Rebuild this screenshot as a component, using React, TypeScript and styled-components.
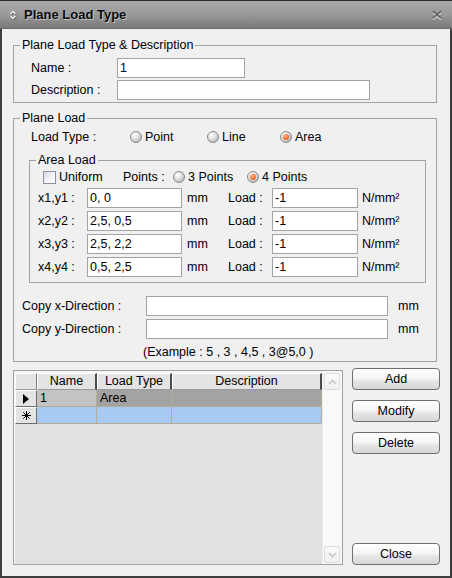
import styled, { createGlobalStyle, css } from "styled-components";

const GlobalStyle = createGlobalStyle`
  html, body {
    margin: 0;
    padding: 0;
    background: #f0f0f0;
  }
  body {
    font-family: "Liberation Sans", Arial, sans-serif;
    font-size: 12.5px;
    color: #000;
  }
  * {
    box-sizing: border-box;
  }
`;

const Window = styled.div`
  width: 452px;
  height: 578px;
  display: flex;
  flex-direction: column;
  background: #f0f0f0;
  border: 2px solid #3e3e3e;
  border-top: none;
`;

const TitleBar = styled.div`
  height: 29px;
  flex: none;
  display: flex;
  align-items: center;
  padding: 0 10px 0 9px;
  margin: 0 -2px;
  border-top: 1px solid #2e2e2e;
  border-bottom: 1px solid #6c6c6c;
  background: linear-gradient(#a9a9a9 0%, #9c9c9c 45%, #8c8c8c 70%, #7a7a7a 100%);
`;

const Title = styled.span`
  margin-left: 7px;
  font-weight: bold;
  font-size: 13px;
  color: #0c0c0c;
  text-shadow: 1px 1px 0 #c4c4c4;
  flex: 1;
`;

const Body = styled.div`
  flex: 1;
  display: flex;
  flex-direction: column;
  padding: 9px 11px 0 11px;
`;

const Group = styled.fieldset<{ $mt?: number; $ml?: number; $mr?: number; $pt?: number; $pb?: number }>`
  margin: ${(p) => p.$mt ?? 0}px ${(p) => p.$mr ?? 0}px 0 ${(p) => p.$ml ?? 0}px;
  padding: ${(p) => p.$pt ?? 0}px 0 ${(p) => p.$pb ?? 0}px 6px;
  border: 1px solid #a2a2a2;
  min-width: 0;
`;

const Legend = styled.legend`
  padding: 0 2px;
  line-height: 14px;
`;

const Row = styled.div<{ $indent?: number; $h?: number; $mt?: number }>`
  display: flex;
  align-items: center;
  height: ${(p) => p.$h ?? 20}px;
  padding-left: ${(p) => p.$indent ?? 0}px;
  margin-top: ${(p) => p.$mt ?? 0}px;
  white-space: nowrap;
`;

const Label = styled.span<{ $w: number }>`
  width: ${(p) => p.$w}px;
  flex: none;
  white-space: nowrap;
  margin-top: -1px;
`;

const TextBox = styled.input<{ $w: number }>`
  width: ${(p) => p.$w}px;
  height: 20px;
  flex: none;
  border: 1px solid #a4a4a4;
  background: #fff;
  padding: 0 2px;
  font: inherit;
  color: #000;
  outline: none;
`;

const Unit = styled.span<{ $pl?: number }>`
  padding-left: ${(p) => p.$pl ?? 0}px;
  white-space: nowrap;
`;

const Option = styled.label<{ $w?: number }>`
  display: inline-flex;
  align-items: center;
  gap: 3px;
  width: ${(p) => (p.$w ? `${p.$w}px` : "auto")};
  flex: none;
`;

const RadioDot = styled.span<{ $on?: boolean }>`
  width: 12px;
  height: 12px;
  flex: none;
  border-radius: 50%;
  border: 1px solid #8a8a8a;
  background: radial-gradient(circle at 35% 30%, #ffffff 0%, #e2e2e2 40%, #a2a2a2 100%);
  position: relative;
  ${(p) =>
    p.$on &&
    css`
      &::after {
        content: "";
        position: absolute;
        left: 2px;
        top: 2px;
        width: 6px;
        height: 6px;
        border-radius: 50%;
        background: radial-gradient(circle at 40% 35%, #ffc09a 0%, #ff7030 50%, #e04a10 100%);
      }
    `}
`;

const CheckBox = styled.span`
  width: 13px;
  height: 13px;
  flex: none;
  border: 1px solid #8f90a2;
  background: linear-gradient(135deg, #d8d8e2 0%, #f4f4f8 60%, #ffffff 100%);
`;

const CoordRow = styled.div<{ $mt?: number }>`
  display: grid;
  grid-template-columns: 49px 95px 46px 44px 86px auto;
  align-items: center;
  height: 20px;
  padding-left: 2px;
  margin-top: ${(p) => p.$mt ?? 0}px;
  white-space: nowrap;
`;

const Note = styled.div`
  margin-top: 6px;
  height: 14px;
  line-height: 14px;
  padding-left: 123px;
`;

const Bottom = styled.div`
  display: flex;
  margin-top: 8px;
  gap: 9px;
`;

const Grid = styled.div`
  width: 330px;
  height: 195px;
  flex: none;
  display: flex;
  border: 1px solid #a0a0a0;
  background: #f7f7f7;
  padding: 2px 2px 0 1px;
`;

const DataArea = styled.div`
  width: 308px;
  display: grid;
  grid-template-columns: 22px 60px 75px 150px;
  grid-auto-rows: 17px;
  align-content: start;
  background: #e1e1e3;
`;

const HeadCell = styled.div<{ $corner?: boolean }>`
  background: #e4e4e4;
  border-top: 1px solid #ffffff;
  border-left: 1px solid #ffffff;
  border-bottom: 1px solid #9a9a9a;
  border-right: ${(p) => (p.$corner ? "1px solid #7a7a7a" : "2px solid #4c4c4c")};
  text-align: center;
  line-height: 14px;
`;

const RowHead = styled.div`
  background: #e4e4e4;
  border-top: 1px solid #ffffff;
  border-left: 1px solid #ffffff;
  border-right: 1px solid #6e6e6e;
  border-bottom: 1px solid #6e6e6e;
  display: flex;
  align-items: center;
  justify-content: center;
`;

const Cell = styled.div<{ $bg: string }>`
  background: ${(p) => p.$bg};
  border-right: 1px solid #b2ae9a;
  border-bottom: 1px solid #b2ae9a;
  padding-left: 3px;
  line-height: 16px;
  white-space: nowrap;
  overflow: hidden;
`;

const ScrollBar = styled.div`
  width: 18px;
  display: flex;
  flex-direction: column;
  justify-content: space-between;
  padding: 0 1px 1px 1px;
  background: #f9f9f9;
  border-left: 1px solid #ececec;
`;

const ScrollButton = styled.div`
  width: 16px;
  height: 17px;
  border: 1px solid #dddddd;
  border-radius: 2px;
  background: linear-gradient(#fbfbfb, #f0f0f0);
  display: flex;
  align-items: center;
  justify-content: center;
`;

const ButtonColumn = styled.div`
  display: flex;
  flex-direction: column;
  gap: 10px;
  margin-top: -2px;
  height: 197px;
`;

const Button = styled.button<{ $last?: boolean }>`
  width: 88px;
  height: 22px;
  flex: none;
  padding: 0;
  border: 1px solid #6f6f6f;
  border-radius: 4px;
  background: linear-gradient(#ffffff 0%, #f6f6f6 45%, #e6e6e6 60%, #d6d6d6 100%);
  font: inherit;
  color: #000;
  margin-top: ${(p) => (p.$last ? "auto" : "0")};
`;

const SortIcon = () => (
  <svg width="8" height="12" viewBox="0 0 8 12">
    <path d="M1.5 5 L4 2.5 L6.5 5 M1.5 7 L4 9.5 L6.5 7" fill="none" stroke="#555" strokeWidth="1.5" transform="translate(0.7,0.7)" />
    <path d="M1.5 5 L4 2.5 L6.5 5 M1.5 7 L4 9.5 L6.5 7" fill="none" stroke="#ececec" strokeWidth="1.5" />
  </svg>
);

const CloseIcon = () => (
  <svg width="10" height="10" viewBox="0 0 10 10">
    <path d="M1 2 L9 9 M9 2 L1 9" stroke="#c8c8c8" strokeWidth="1.6" transform="translate(0,0.8)" />
    <path d="M1 1 L9 8 M9 1 L1 8" stroke="#5e5e5e" strokeWidth="1.6" />
  </svg>
);

const Arrow = () => (
  <svg width="6" height="10" viewBox="0 0 6 10">
    <polygon points="0,0 6,5 0,10" fill="#000" />
  </svg>
);

const NewRowMark = () => (
  <svg width="9" height="9" viewBox="0 0 9 9">
    <path d="M4.5 0 V9 M0 4.5 H9 M1.3 1.3 L7.7 7.7 M7.7 1.3 L1.3 7.7" stroke="#000" strokeWidth="1" />
  </svg>
);

const Chevron = ({ down }: { down?: boolean }) => (
  <svg width="9" height="6" viewBox="0 0 9 6">
    <path d={down ? "M1 1 L4.5 4.5 L8 1" : "M1 5 L4.5 1.5 L8 5"} fill="none" stroke="#c6c6c6" strokeWidth="1.6" />
  </svg>
);

const coords = [
  { label: "x1,y1 :", value: "0, 0" },
  { label: "x2,y2 :", value: "2,5, 0,5" },
  { label: "x3,y3 :", value: "2,5, 2,2" },
  { label: "x4,y4 :", value: "0,5, 2,5" },
];

export default function App() {
  return (
    <>
      <GlobalStyle />
      <Window>
        <TitleBar>
          <SortIcon />
          <Title>Plane Load Type</Title>
          <CloseIcon />
        </TitleBar>
        <Body>
          <Group $mr={2} $pt={6} $pb={2}>
            <Legend>Plane Load Type &amp; Description</Legend>
            <Row $indent={11}>
              <Label $w={86}>Name :</Label>
              <TextBox $w={128} defaultValue="1" readOnly />
            </Row>
            <Row $indent={11} $mt={2}>
              <Label $w={86}>Description :</Label>
              <TextBox $w={253} defaultValue="" readOnly />
            </Row>
          </Group>

          <Group $mt={8} $mr={2} $pt={3} $pb={2}>
            <Legend>Plane Load</Legend>
            <Row $indent={11} $h={18}>
              <Label $w={99}>Load Type :</Label>
              <Option $w={77}>
                <RadioDot />
                Point
              </Option>
              <Option $w={73}>
                <RadioDot />
                Line
              </Option>
              <Option>
                <RadioDot $on />
                Area
              </Option>
            </Row>

            <Group $mt={7} $ml={9} $mr={10} $pt={2} $pb={5}>
              <Legend>Area Load</Legend>
              <Row $indent={7} $h={16}>
                <Option $w={80}>
                  <CheckBox />
                  Uniform
                </Option>
                <Label $w={50}>Points :</Label>
                <Option $w={74}>
                  <RadioDot />3 Points
                </Option>
                <Option>
                  <RadioDot $on />4 Points
                </Option>
              </Row>
              {coords.map((c) => (
                <CoordRow key={c.label} $mt={3}>
                  <Label $w={49}>{c.label}</Label>
                  <TextBox $w={95} defaultValue={c.value} readOnly />
                  <Unit $pl={5}>mm</Unit>
                  <Label $w={44}>Load :</Label>
                  <TextBox $w={86} defaultValue="-1" readOnly />
                  <Unit $pl={4}>N/mm²</Unit>
                </CoordRow>
              ))}
            </Group>

            <Row $indent={2} $mt={13}>
              <Label $w={124}>Copy x-Direction :</Label>
              <TextBox $w={242} defaultValue="" readOnly />
              <Unit $pl={10}>mm</Unit>
            </Row>
            <Row $indent={2} $mt={3}>
              <Label $w={124}>Copy y-Direction :</Label>
              <TextBox $w={242} defaultValue="" readOnly />
              <Unit $pl={10}>mm</Unit>
            </Row>
            <Note>(Example : 5 , 3 , 4,5 , 3@5,0 )</Note>
          </Group>

          <Bottom>
            <Grid>
              <DataArea>
                <HeadCell $corner />
                <HeadCell>Name</HeadCell>
                <HeadCell>Load Type</HeadCell>
                <HeadCell>Description</HeadCell>

                <RowHead>
                  <Arrow />
                </RowHead>
                <Cell $bg="#c3c3c3">1</Cell>
                <Cell $bg="#a3a3a3">Area</Cell>
                <Cell $bg="#a3a3a3" />

                <RowHead>
                  <NewRowMark />
                </RowHead>
                <Cell $bg="#a6caf0" />
                <Cell $bg="#a6caf0" />
                <Cell $bg="#a6caf0" />
              </DataArea>
              <ScrollBar>
                <ScrollButton>
                  <Chevron />
                </ScrollButton>
                <ScrollButton>
                  <Chevron down />
                </ScrollButton>
              </ScrollBar>
            </Grid>
            <ButtonColumn>
              <Button>Add</Button>
              <Button>Modify</Button>
              <Button>Delete</Button>
              <Button $last>Close</Button>
            </ButtonColumn>
          </Bottom>
        </Body>
      </Window>
    </>
  );
}
